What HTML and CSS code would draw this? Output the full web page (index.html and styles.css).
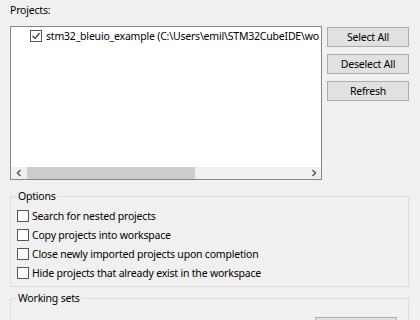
FILE: index.html
```html
<!DOCTYPE html>
<html lang="en">
  <head>
    <meta charset="utf-8" />
    <title>Import Projects</title>
    <link rel="stylesheet" href="styles.css">
  </head>
  <body>
    <div class="page">
      <div class="title">Projects:</div>
      <div class="projects">
        <div class="list">
          <div class="list-items">
            <div class="item">
              <span class="check">
                <svg width="10" height="10" viewBox="0 0 10 10"><polyline points="1.5,5 4,7.5 8.5,2" /></svg>
              </span>
              <span class="item-text">stm32_bleuio_example (C:\Users\emil\STM32CubeIDE\wo</span>
            </div>
          </div>
          <div class="hscroll">
            <span class="arrow">
              <svg width="6" height="8" viewBox="0 0 6 8"><polyline points="4.5,1 1.5,4 4.5,7" /></svg>
            </span>
            <div class="track"><div class="thumb"></div></div>
            <span class="arrow">
              <svg width="6" height="8" viewBox="0 0 6 8"><polyline points="1.5,1 4.5,4 1.5,7" /></svg>
            </span>
          </div>
        </div>
        <div class="buttons">
          <button>Select All</button>
          <button>Deselect All</button>
          <button>Refresh</button>
        </div>
      </div>

      <fieldset class="group options">
        <legend>Options</legend>
        <label class="option"><span class="check"></span>Search for nested projects</label>
        <label class="option"><span class="check"></span>Copy projects into workspace</label>
        <label class="option"><span class="check"></span>Close newly imported projects upon completion</label>
        <label class="option"><span class="check"></span>Hide projects that already exist in the workspace</label>
      </fieldset>

      <fieldset class="group working">
        <legend>Working sets</legend>
        <div class="working-row">
          <button class="ws-button"></button>
        </div>
      </fieldset>
    </div>
  </body>
</html>
```

FILE: styles.css
```css
html {
  font-family: "Noto Sans", "Segoe UI", sans-serif;
  font-size: 10.5px;
  line-height: 14px;
  letter-spacing: -0.2px;
  color: #000;
}

body {
  margin: 0;
  background-color: #f0f0f0;
  overflow: hidden;
}

.page {
  padding: 3px 11px 0 10px;
}

.title {
  height: 14px;
  margin-bottom: 9px;
}

.projects {
  display: flex;
  gap: 5px;
}

.list {
  box-sizing: border-box;
  width: 312px;
  height: 154px;
  border: 1px solid #828790;
  background-color: white;
  display: flex;
  flex-direction: column;
}

.list-items {
  flex: 1;
  min-width: 0;
  overflow: hidden;
  padding: 2px 0 0 19px;
}

.item {
  display: flex;
  align-items: center;
  gap: 4px;
  height: 14px;
  white-space: nowrap;
}

.item-text {
  min-width: 0;
  overflow: hidden;
}

.check {
  box-sizing: border-box;
  flex: none;
  display: flex;
  align-items: center;
  justify-content: center;
  width: 12px;
  height: 12px;
  border: 1px solid #555;
  background-color: white;
}

.check polyline {
  fill: none;
  stroke: #444;
  stroke-width: 1.2;
}

.hscroll {
  display: flex;
  height: 12px;
  background-color: #f0f0f0;
}

.arrow {
  display: flex;
  align-items: center;
  justify-content: center;
  width: 15px;
}

.arrow polyline {
  fill: none;
  stroke: #606060;
  stroke-width: 1.6;
}

.track {
  flex: 1;
  display: flex;
}

.thumb {
  width: 168px;
  margin-left: 1px;
  background-color: #cdcdcd;
}

.buttons {
  display: flex;
  flex-direction: column;
  gap: 7px;
  padding-top: 1px;
}

button {
  box-sizing: border-box;
  width: 82px;
  height: 20px;
  padding: 0;
  font-family: inherit;
  font-size: 1em;
  letter-spacing: inherit;
  color: #000;
  background-color: #e1e1e1;
  border: 1px solid #adadad;
}

.group {
  margin: 0;
  padding: 3px 0 4px 6px;
  border: 1px solid #dcdcdc;
}

.group legend {
  padding: 0 1px;
  line-height: 14px;
}

.options {
  margin-top: 9px;
}

.option {
  display: flex;
  align-items: center;
  gap: 3px;
  height: 19px;
  white-space: nowrap;
}

.working {
  margin-top: 4px;
  height: 60px;
}

.working-row {
  display: flex;
  justify-content: flex-end;
  padding: 9px 11px 0 0;
}
```
